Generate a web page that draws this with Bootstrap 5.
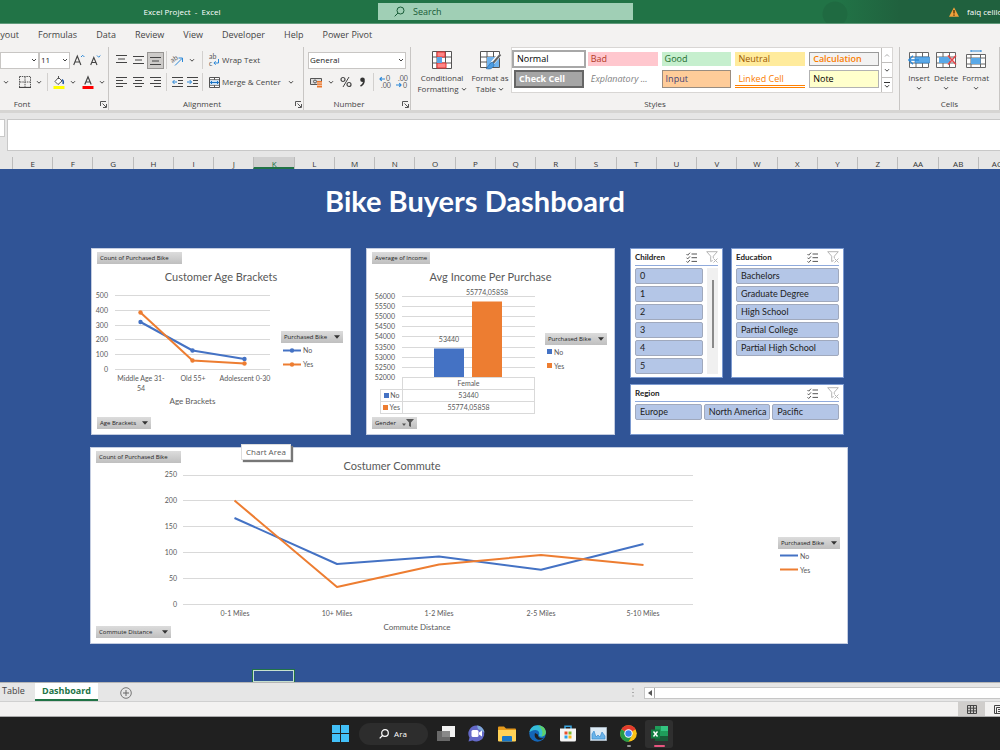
<!DOCTYPE html>
<html lang="en">
<head>
<meta charset="utf-8">
<meta name="viewport" content="width=device-width, initial-scale=1">
<title>Excel Project - Excel</title>
<link href="https://cdn.jsdelivr.net/npm/bootstrap@5.3.0/dist/css/bootstrap.min.css" rel="stylesheet">
<style>
:root{--xl:#217346;--ink:#444;--blue:#4472c4;--orange:#ed7d31;--ui:"Open Sans","Noto Sans",sans-serif;--cal:Lato,"Open Sans",sans-serif}
body{font-family:var(--ui);font-size:8px;line-height:12px;color:var(--ink);background:#f3f2f1;overflow:hidden}
button{font:inherit;color:inherit;border:0;background:none;padding:0;margin:0;display:flex;align-items:center;justify-content:center;white-space:nowrap}
svg{display:block;flex:none;overflow:visible}
a{color:inherit;text-decoration:none}
/* title bar */
.title-bar{height:24px;background:radial-gradient(circle at 835px 14px,#1f6a41 0 12px,transparent 13px),linear-gradient(90deg,var(--xl) 84%,#20613e 90%);border-bottom:1px solid #5f9a7a;color:#fff}
.doc-name{flex:364 0 0;margin-right:14px;text-align:center;white-space:pre}
.search-box{flex:255 0 0;height:17px;background:#a0cfb5;color:#185c37}
.search-box input{font-size:9px;line-height:12px;color:#185c37;border:0;background:none;padding:0;width:100%;outline:0}
.search-box input::placeholder{color:#185c37;opacity:1}
.title-right{flex:367 0 0;min-width:0}
.user-name{width:33px;overflow:hidden;white-space:nowrap}
/* ribbon */
.ribbon-tabs{height:22px;font-size:9px;gap:19px}
.tab-cut{width:19px;display:flex;justify-content:flex-end;overflow:hidden}
.ribbon{height:67px;border-bottom:3px solid #d6d5d3;padding-top:1px}
.group{border-right:1px solid #c8c6c4;height:63px;display:flex;flex-direction:column}
.g-font{flex:0 0 109px}.g-align{flex:0 0 195px}.g-num{flex:0 0 107px}.g-styles{flex:1 0 486px}.g-cells{flex:0 0 100px}
.tool-row{height:18px;margin-top:4px;display:flex;align-items:center}
.group-foot{margin-top:auto;height:12px;position:relative;width:100%;text-align:center}
.group-foot button{position:absolute;right:1px;top:3px}
.t17{width:17px;height:17px}.t12{width:12px;height:17px}
.t17.on{background:#cdcbc9;border:1px solid #979593}
.vsep{width:1px;height:18px;background:#d2d0ce;margin:0 2px}
.word-btn{gap:2px;margin-left:4px}
.drop{appearance:none;border:1px solid #c8c6c4;border-radius:0;background:#fff url("data:image/svg+xml,%3Csvg xmlns='http://www.w3.org/2000/svg' width='7' height='5'%3E%3Cpath d='M1 1l2 2 2-2' fill='none' stroke='%23444'/%3E%3C/svg%3E") no-repeat right 0 center;height:17px;padding:0 1px;font-size:8px;line-height:12px;color:#222}
.big{flex-direction:column;justify-content:flex-start;gap:3px;line-height:11px;padding-top:4px}
.style-tools{display:flex;gap:2px;padding:0 6px 0 4px}
.cell-tools{display:flex;gap:4px;padding-left:8px}
.gallery{border:1px solid #d8d6d4;background:#fff;height:46px}
.style-grid{display:grid;grid-template-columns:repeat(5,1fr);gap:4px;padding:4px 2px;flex:1}
.style-grid button{justify-content:flex-start;padding-left:3px;font-size:9px;line-height:12px;overflow:hidden;min-width:0}
.s-normal{outline:2px solid #a8a8a8;color:#000}
.s-bad{background:#ffc7ce;color:#b4391e}
.s-good{background:#c6efce;color:#1c6b2b}
.s-neutral{background:#ffeb9c;color:#9c5700}
button.s-calc{background:#f2f2f2;color:#fa7d00;border:1px solid #9a9a9a;font-weight:600}
button.s-check{background:#a5a5a5;color:#fff;font-weight:700;border:2px solid #666}
.s-expl{color:#7f7f7f;font-style:italic}
button.s-input{background:#ffcc99;color:#3f3f76;border:1px solid #9a8d80}
button.s-linked{color:#fa7d00;border-bottom:3px double #ff8001;padding-top:3px}
button.s-note{background:#ffffcc;color:#000;border:1px solid #b2b2b2}
.gal-scroll{width:11px;border-left:1px solid #c0bebc}
.gal-scroll button{flex:1;border-bottom:1px solid #c0bebc;width:100%}
/* formula bar and column heads */
.formula-bar{background:#e6e6e6;height:44px;padding-top:6px;gap:2px;align-items:flex-start}
.name-box{width:5px;height:18px;background:#fff;border:1px solid #c8c8c8;border-left:0}
.fx-input{flex:1;height:32px;border:1px solid #c8c8c8;border-right:0;background:#fff;border-radius:0;padding:0 4px}
.cols{display:grid;grid-template-columns:12px repeat(49,20fr) 2fr}
.col-heads{background:#e6e6e6;height:12px;color:#333;text-align:center;line-height:13px}
.col-heads>*{grid-column:span 2;border-left:1px solid #bcbcbc;overflow:hidden}
.col-heads>:first-child{grid-column:span 1;border-left:0}
.col-heads>:last-child{text-align:left;padding-left:13px}
.col-heads .picked{background:#cfcfcf;color:var(--xl);border-bottom:2px solid var(--xl)}
/* sheet */
.sheet{background:#305496;flex:1 0 auto}
.dash-title{font:700 29px/40px var(--cal);color:#fff;text-align:center;margin:12px 50px 27px 0}
.dash{padding:0 152px 0 90px;font-family:var(--cal);color:#595959}
.dash-top{display:grid;grid-template-columns:260fr 249fr 214fr;gap:15px;padding:0 4px 0 1px}
.panel{background:#fff;box-shadow:inset 0 0 0 1px #c3cce0;display:flex;flex-direction:column}
.chip{background:linear-gradient(#dcdcdc,#bfbfbf);height:12px;padding:0 3px;font:6px/12px var(--ui);color:#222;gap:6px;justify-content:space-between;margin-left:6px;width:max-content}
.chip-wide{width:85px}.chip-mid{width:75px}.chip-key{width:62px;margin:0}
.chip-low{margin-top:auto;margin-bottom:6px}
.chart-title{font-size:11px;font-weight:400;line-height:16px;text-align:center;margin:5px 0 0}
.plot{flex:1 1 0;min-width:0}
.plot svg,svg.plot{width:100%;height:auto}
.legend-box{width:62px;margin:6px 8px 0 6px;font-size:7px;line-height:14px;flex:none}
.legend-box div{display:flex;align-items:center;gap:2px;padding-left:2px}
svg text{font-family:var(--cal);font-size:7px;fill:#595959}
svg .mid{text-anchor:middle}svg .end{text-anchor:end}
svg .head-text{font-size:11px}svg .axis-title{font-size:8px}
.grid-line{stroke:#d9d9d9;stroke-width:1;fill:none}
.ln-no,.ln-yes{fill:none;stroke-width:2;stroke-linejoin:round}
.ln-no{stroke:var(--blue)}.ln-yes{stroke:var(--orange)}
.key{width:5px;height:5px;display:inline-block}
.key-no{background:var(--blue)}.key-yes{background:var(--orange)}
.data-table{margin-left:14px;width:155px;border-collapse:collapse;font-size:7px;line-height:11px;text-align:center;color:#595959}
.data-table td,.data-table th{border:1px solid #d9d9d9;padding:0;height:12px;font-weight:400}
.data-table .blank{border-left:0;border-top:0;width:22px}
.slicer-col{display:flex;flex-direction:column;gap:6px}
.slicer-top{display:flex;gap:8px;height:130px}
.slicer{background:#fff;padding:0 4px;font-size:8px;line-height:12px;color:#222;border:1px solid #7c9ad0}
.sl-children{flex:92 0 0}.sl-education{flex:114 0 0}.sl-region{height:51px}
.slicer-head{height:17px;border-bottom:1px solid #8faadc;font-weight:700;margin-bottom:2px}
.slice{background:#b4c6e7;border:1px solid #a0a9bd;border-radius:2px;height:16px;width:100%;justify-content:flex-start;padding-left:4px;color:#222;font-size:9px}
.slice-list{display:flex;flex-direction:column;gap:2px}
.region-row{display:flex;gap:2px}
.region-row .slice{flex:1 1 0}
.scroll-track{width:11px;background:#f0f0f0;display:flex;justify-content:center;padding:12px 0 26px}
.scroll-track span{width:2px;background:#8a8a8a}
.commute{margin-top:12px;position:relative;flex-direction:row;align-items:center}
.commute .chip-wide{position:absolute;left:0;top:4px}
.commute .chip-mid{position:absolute;left:0;bottom:6px}
.commute .legend-box{margin-top:22px}
.tip{position:absolute;left:151px;top:-3px;background:#fff;font-size:8px;line-height:14px;padding:0 4px;font-family:var(--ui);box-shadow:2px 2px 1px #777;border:1px solid #ddd}
.picked-cell{grid-column:14/span 2;height:12px;border:1px solid #c6e0cf;outline:1px solid var(--xl)}
/* bottom bars */
.sheet-tabs{height:20px;background:#e6e6e6;border-top:1px solid #b5b5b5;border-bottom:1px solid #d0d0d0;font-size:9px;align-items:flex-start}
.sheet-tabs a{line-height:16px}
.prev-tab{width:35px;padding-left:2px}
.sheet-tabs .current{background:#fff;color:var(--xl);font-weight:700;width:63px;text-align:center;border-bottom:2px solid var(--xl)}
.add-tab{margin:4px 0 0 22px}
.h-scroll{flex:0 0 356px;height:12px;border:1px solid #c6c6c6;border-right:0;background:#fff;margin-top:4px}
.h-scroll button{width:10px;border-right:1px solid #aaa;height:10px}
.status-bar{height:15px;background:#f3f2f1;border-bottom:1px solid #aaa}
.status-bar button{width:27px;height:14px}
.view-on{background:#d0cecc!important}
.view-cut{width:15px;overflow:hidden}
.taskbar{height:33px;background:#202020;color:#fff;gap:4px}
.find{width:69px;height:22px;border-radius:11px;background:#2d2d2d;gap:5px;color:#fff}
.app{width:28px;height:28px;border-radius:3px;position:relative}
.app.open{background:#2f2f2f}
.app.open::after,.app.live::after{content:"";position:absolute;bottom:1px;width:11px;height:2px;border-radius:1px;background:#e8557f}
.app.live::after{width:4px;background:#999}
.apps{width:242px}
</style>
</head>
<body class="d-flex flex-column min-vh-100">
<svg width="0" height="0" class="position-absolute" aria-hidden="true">
  <symbol id="chev" viewBox="0 0 6 5"><path d="M1 1.200l2 2 2-2" fill="none" stroke="#444"/></symbol>
  <symbol id="launch" viewBox="0 0 7 7"><path d="M.5 5V.5H6M2.500 2.500L6 6M6.500 3v3.500H3" fill="none" stroke="#555"/></symbol>
  <symbol id="multi" viewBox="0 0 12 11"><path d="M.5 2l1.200 1.200L4 .7M.5 5.700l1.200 1.200L4 4.400M.5 9.300l1.200 1.200L4 8M5.500 2H11M5.500 5.700H11M5.500 9.400H11" fill="none" stroke="#555"/></symbol>
  <symbol id="clear" viewBox="0 0 12 12"><path d="M.7.7h10.600L7.300 5.200V7M.7.7l4 4.500v5.300l2 -1M7.500 7.500l4 4M11.500 7.500l-4 4" fill="none" stroke="#b4b4b4"/></symbol>
  <symbol id="tri" viewBox="0 0 6 4"><path d="M0 .3h6L3 3.700z" fill="#333"/></symbol>
</svg>

<header>
  <div class="title-bar d-flex align-items-center">
    <div class="doc-name">Excel Project  -  Excel</div>
    <label class="search-box d-flex align-items-center">
      <svg class="mx-2 ms-3" width="11" height="11" viewBox="0 0 11 11"><circle cx="6.500" cy="4.500" r="3.500" fill="none" stroke="#185c37"/><path d="M4 7L.7 10.300" stroke="#185c37"/></svg>
      <input type="search" placeholder="Search" aria-label="Search">
    </label>
    <div class="title-right d-flex align-items-center justify-content-end gap-2">
      <svg width="10" height="10" viewBox="0 0 10 10"><path d="M5 .3L10 9.700H0z" fill="#f0a13c"/><path d="M5 3v3.500M5 7.500v1.200" stroke="#4a2c00" stroke-width="1.300"/></svg>
      <div class="user-name">faiq celilov</div>
    </div>
  </div>
  <nav class="ribbon-tabs d-flex align-items-center" aria-label="Ribbon">
    <a href="#" class="tab-cut">Layout</a><a href="#">Formulas</a><a href="#">Data</a><a href="#">Review</a><a href="#">View</a><a href="#">Developer</a><a href="#">Help</a><a href="#" class="text-nowrap">Power Pivot</a>
  </nav>
  <div class="ribbon d-flex">
    <section class="group g-font">
      <div class="tool-row">
        <select class="drop" style="width:39px" aria-label="Font"><option></option></select>
        <select class="drop" style="width:31px" aria-label="Font size"><option>11</option></select>
        <button class="t17" aria-label="Grow font"><svg width="12" height="12" viewBox="0 0 12 12"><path d="M.7 11L4.300 2l3.600 9M2 8h4.700" fill="none" stroke="#444" stroke-width="1.100"/><path d="M8 3l1.700-1.700L11.400 3" fill="none" stroke="#2b88d8"/></svg></button>
        <button class="t17" aria-label="Shrink font"><svg width="11" height="12" viewBox="0 0 11 12"><path d="M.7 11L3.800 3.500 7 11M2 8.500h3.800" fill="none" stroke="#444" stroke-width="1.100"/><path d="M7 1.500l1.700 1.700 1.700-1.700" fill="none" stroke="#2b88d8"/></svg></button>
      </div>
      <div class="tool-row">
        <button class="t12" aria-label="Underline options"><svg width="6" height="5"><use href="#chev"/></svg></button>
        <button class="t17 ms-1" aria-label="Borders"><svg width="12" height="12" viewBox="0 0 12 12"><path d="M.5.500h11v11M.5.500v11M6 1v10M1 6h10" fill="none" stroke="#555" stroke-dasharray="1.500 .8"/><path d="M0 11.400h12" stroke="#333"/></svg></button>
        <button class="t12" aria-label="Border options"><svg width="6" height="5"><use href="#chev"/></svg></button>
        <span class="vsep"></span>
        <button class="t17" aria-label="Fill color"><svg width="12" height="13" viewBox="0 0 12 13"><path d="M5.500 1.500L9 5 5 8.500 2 5.500zM5.500 3V0" fill="#fff" stroke="#555"/><path d="M9 3.500c1.500 1 1.500 3 1 4.500" fill="none" stroke="#2458a6" stroke-width="1.500"/><path d="M.5 10h11v3H.5z" fill="#ff0"/></svg></button>
        <button class="t12" aria-label="Fill options"><svg width="6" height="5"><use href="#chev"/></svg></button>
        <button class="t17" aria-label="Font color"><svg width="12" height="13" viewBox="0 0 12 13"><path d="M2.800 8.500L6 .8l3.200 7.700M4 6h4" fill="none" stroke="#444" stroke-width="1.200"/><path d="M.5 10h11v3H.5z" fill="red"/></svg></button>
        <button class="t12" aria-label="Font color options"><svg width="6" height="5"><use href="#chev"/></svg></button>
      </div>
      <div class="group-foot pe-5"><span class="pe-3">Font</span><button aria-label="Font settings"><svg width="7" height="7"><use href="#launch"/></svg></button></div>
    </section>
    <section class="group g-align">
      <div class="tool-row ps-1">
        <button class="t17" aria-label="Top align"><svg width="11" height="10" viewBox="0 0 11 10"><path d="M0 .5h11M2 4h7M0 7.500h11" stroke="#444"/></svg></button>
        <button class="t17" aria-label="Middle align"><svg width="11" height="10" viewBox="0 0 11 10"><path d="M0 1.500h11M2 5h7M0 8.500h11" stroke="#444"/></svg></button>
        <button class="t17 on" aria-label="Bottom align"><svg width="11" height="10" viewBox="0 0 11 10"><path d="M0 2.500h11M2 6h7M0 9.500h11" stroke="#444"/></svg></button>
        <span class="vsep"></span>
        <button class="t17" aria-label="Orientation"><svg width="13" height="12" viewBox="0 0 13 12"><text x="0" y="7" transform="rotate(-35 4 6)">ab</text><path d="M4 11.500L11 4.500M7.500 4h4v4" fill="none" stroke="#2b88d8"/></svg></button>
        <button class="t12" aria-label="Orientation options"><svg width="6" height="5"><use href="#chev"/></svg></button>
        <span class="vsep ms-1"></span>
        <button class="word-btn"><svg width="11" height="12" viewBox="0 0 11 12"><text x="0" y="5">ab</text><text x="0" y="12">c</text><path d="M9.500 5v4H5M6.700 7.200L4.900 9l1.800 1.800" fill="none" stroke="#2b88d8"/></svg><span>Wrap Text</span></button>
      </div>
      <div class="tool-row ps-1">
        <button class="t17" aria-label="Align left"><svg width="11" height="10" viewBox="0 0 11 10"><path d="M0 .5h11M0 3.500h7M0 6.500h11M0 9.500h7" stroke="#444"/></svg></button>
        <button class="t17" aria-label="Center"><svg width="11" height="10" viewBox="0 0 11 10"><path d="M0 .5h11M2 3.500h7M0 6.500h11M2 9.500h7" stroke="#444"/></svg></button>
        <button class="t17" aria-label="Align right"><svg width="11" height="10" viewBox="0 0 11 10"><path d="M0 .5h11M4 3.500h7M0 6.500h11M4 9.500h7" stroke="#444"/></svg></button>
        <span class="vsep"></span>
        <button class="t17" aria-label="Decrease indent"><svg width="11" height="10" viewBox="0 0 11 10"><path d="M0 .5h11M6 3.500h5M6 6.500h5M0 9.500h11" stroke="#444"/><path d="M5 5H.7M2.500 3L.7 5l1.800 2" fill="none" stroke="#2b88d8"/></svg></button>
        <button class="t12" aria-label="Increase indent"><svg width="11" height="10" viewBox="0 0 11 10"><path d="M0 .5h11M6 3.500h5M6 6.500h5M0 9.500h11" stroke="#444"/><path d="M0 5h4.500M2.700 3l1.800 2-1.800 2" fill="none" stroke="#2b88d8"/></svg></button>
        <span class="vsep ms-1"></span>
        <button class="word-btn"><svg width="11" height="11" viewBox="0 0 11 11"><path d="M.5.500h10v10H.5zM.5 2.800h10M.5 8.200h10M5.500 .5v2.300M5.500 8.200v2.300" fill="#fff" stroke="#555"/><path d="M1 3.300h9v4.400H1z" fill="#cfe4f7"/><path d="M1.200 5.500h8.600M3 4L1.500 5.500 3 7M8 4l1.500 1.500L8 7" fill="none" stroke="#1a73c4"/></svg><span>Merge &amp; Center</span></button>
        <button class="t12 ms-1" aria-label="Merge options"><svg width="6" height="5"><use href="#chev"/></svg></button>
      </div>
      <div class="group-foot"><span class="pe-2">Alignment</span><button aria-label="Alignment settings"><svg width="7" height="7"><use href="#launch"/></svg></button></div>
    </section>
    <section class="group g-num">
      <div class="tool-row ps-1 pe-1"><select class="drop w-100" aria-label="Number format"><option>General</option></select></div>
      <div class="tool-row ps-1">
        <button class="t17" aria-label="Accounting format"><svg width="13" height="11" viewBox="0 0 13 11"><path d="M.5 1.500h11v6H.5z" fill="#ddd" stroke="#555"/><circle cx="5" cy="4.500" r="1.500" fill="none" stroke="#555"/><path d="M7 4h5v6.500H7z" fill="#e8762c"/><path d="M7 6h5M7 8.300h5" stroke="#fff" stroke-width=".7"/></svg></button>
        <button class="t12" aria-label="Accounting options"><svg width="6" height="5"><use href="#chev"/></svg></button>
        <button class="t17" aria-label="Percent"><svg width="12" height="12" viewBox="0 0 12 12"><circle cx="3" cy="3.500" r="2" fill="none" stroke="#444" stroke-width="1.200"/><circle cx="9" cy="8.500" r="2" fill="none" stroke="#444" stroke-width="1.200"/><path d="M9 1L3 11" stroke="#444"/></svg></button>
        <button class="t17" aria-label="Comma style"><svg width="7" height="10" viewBox="0 0 7 10"><circle cx="3.500" cy="2.800" r="2.300" fill="#333"/><path d="M5 3.500C5 6.500 3.500 8 1.500 9" fill="none" stroke="#333" stroke-width="1.600"/></svg></button>
        <span class="vsep"></span>
        <button class="t17" aria-label="Increase decimal"><svg width="12" height="12" viewBox="0 0 12 12"><text x="7" y="5">0</text><text x="2" y="12">.00</text><path d="M6 3H1M2.700 1.200L1 3l1.700 1.800" fill="none" stroke="#2b88d8" stroke-width="1.200"/></svg></button>
        <button class="t17" aria-label="Decrease decimal"><svg width="12" height="12" viewBox="0 0 12 12"><text x="2" y="5">.00</text><text x="7" y="12">0</text><path d="M0 9h5M3.300 7.200L5 9l-1.700 1.800" fill="none" stroke="#2b88d8" stroke-width="1.200"/></svg></button>
      </div>
      <div class="group-foot"><span class="pe-3">Number</span><button aria-label="Number settings"><svg width="7" height="7"><use href="#launch"/></svg></button></div>
    </section>
    <section class="group g-styles">
      <div class="style-tools">
        <button class="big" style="width:54px"><svg width="20" height="18" viewBox="0 0 20 18"><path d="M.5.500h19v17H.5zM.5 6h19M.5 12h19M5 .5v17M13.500 .5v17" fill="#fff" stroke="#555"/><path d="M5 1h8v5H5zM5 12h9v5H5z" fill="#ff8585" stroke="#e03535"/><path d="M5 6h5v6H5z" fill="#5aa5e6"/></svg><span>Conditional<br>Formatting <svg class="d-inline-block" width="6" height="5"><use href="#chev"/></svg></span></button>
        <button class="big" style="width:38px"><svg width="21" height="18" viewBox="0 0 21 18"><path d="M.5.500h19v16H.5zM.5 6h19M.5 11h19M7 .5v16M13.500 .5v16" fill="#fff" stroke="#555"/><path d="M7 6h12v10H7z" fill="#6fb3ee"/><path d="M20 3.500l-8 9" stroke="#fff" stroke-width="4"/><path d="M20.500 3.500L13 12" stroke="#666" stroke-width="2"/><path d="M12.500 11c-3 .5-3 4-6.500 6.500 4 1.500 8-.5 8-4.500z" fill="#4a9be0" stroke="#225f9c" stroke-width=".6"/></svg><span>Format as<br>Table <svg class="d-inline-block" width="6" height="5"><use href="#chev"/></svg></span></button>
        <div class="gallery d-flex flex-fill">
          <div class="style-grid">
            <button class="s-normal">Normal</button><button class="s-bad">Bad</button><button class="s-good">Good</button><button class="s-neutral">Neutral</button><button class="s-calc">Calculation</button>
            <button class="s-check">Check Cell</button><button class="s-expl">Explanatory ...</button><button class="s-input">Input</button><button class="s-linked">Linked Cell</button><button class="s-note">Note</button>
          </div>
          <div class="gal-scroll d-flex flex-column">
            <button aria-label="Previous styles"><svg width="6" height="5" viewBox="0 0 6 5"><path d="M1 3.500l2-2 2 2" fill="none" stroke="#aaa"/></svg></button>
            <button aria-label="Next styles"><svg width="6" height="5"><use href="#chev"/></svg></button>
            <button class="border-bottom-0" aria-label="More styles"><svg width="6" height="7" viewBox="0 0 6 7"><path d="M0 .5h6M1 3.200l2 2 2-2" fill="none" stroke="#333"/></svg></button>
          </div>
        </div>
      </div>
      <div class="group-foot">Styles</div>
    </section>
    <section class="group g-cells">
      <div class="cell-tools">
        <button class="big"><svg width="22" height="18" viewBox="0 0 22 18"><path d="M1.500 1.500h19v15h-19zM1.500 6h19M1.500 12h19M8 1.500v15M14.500 1.500v15" fill="#fff" stroke="#666"/><path d="M7 6h14.500v6H7z" fill="#5aa9e8" stroke="#2b7cc4" stroke-width=".6"/><path d="M11 9H1M5 4.800L.8 9 5 13.200" fill="none" stroke="#2b88d8" stroke-width="1.300"/></svg><span>Insert</span><svg width="6" height="5"><use href="#chev"/></svg></button>
        <button class="big"><svg width="22" height="18" viewBox="0 0 22 18"><path d="M1.500 1.500h19v15h-19zM1.500 6h19M1.500 12h19M8 1.500v15M14.500 1.500v15" fill="#fff" stroke="#666"/><path d="M4 6h9l3 3-3 3H4z" fill="#5aa9e8"/><path d="M13 4.500l8 9M21 4.500l-8 9" stroke="#e5474b" stroke-width="1.500"/></svg><span>Delete</span><svg width="6" height="5"><use href="#chev"/></svg></button>
        <button class="big"><svg width="22" height="18" viewBox="0 0 22 18"><path d="M1.500 3.500h19v13h-19zM1.500 7h19M1.500 13h19M6 3.500v13M15.500 3.500v13" fill="#fff" stroke="#666"/><path d="M6 7h9.500v6H6z" fill="#5aa9e8"/><path d="M6 0h10M6 -1v2M16 -1v2" stroke="#2b88d8"/></svg><span>Format</span><svg width="6" height="5"><use href="#chev"/></svg></button>
      </div>
      <div class="group-foot">Cells</div>
    </section>
  </div>
</header>

<div class="formula-bar d-flex"><div class="name-box"></div><input class="fx-input" type="text" aria-label="Formula bar"></div>
<div class="col-heads cols"><span></span><span>E</span><span>F</span><span>G</span><span>H</span><span>I</span><span>J</span><span class="picked">K</span><span>L</span><span>M</span><span>N</span><span>O</span><span>P</span><span>Q</span><span>R</span><span>S</span><span>T</span><span>U</span><span>V</span><span>W</span><span>X</span><span>Y</span><span>Z</span><span>AA</span><span>AB</span><span>AC</span></div>

<main class="sheet d-flex flex-column">
  <h1 class="dash-title">Bike Buyers Dashboard</h1>
  <div class="dash">
    <div class="dash-top">
      <section class="panel pt-1">
        <button class="chip chip-wide">Count of Purchased Bike</button>
        <h2 class="chart-title">Customer Age Brackets</h2>
        <div class="d-flex align-items-center">
          <div class="plot"><svg viewBox="91 285 184 126" role="img" aria-label="Customer age brackets">
            <path class="grid-line" d="M115 295.500h155M115 310.500h155M115 325.500h155M115 339.500h155M115 354.500h155M115 369.500h155"/>
            <g class="end"><text x="108" y="298">500</text><text x="108" y="313">400</text><text x="108" y="328">300</text><text x="108" y="342">200</text><text x="108" y="357">100</text><text x="108" y="372">0</text></g>
            <path class="ln-no" d="M140.500 322L192.500 350.500 244.500 359"/><g fill="#4472c4"><circle cx="140.500" cy="322" r="2.200"/><circle cx="192.500" cy="350.500" r="2.200"/><circle cx="244.500" cy="359" r="2.200"/></g>
            <path class="ln-yes" d="M140.500 312.500L192.500 360.500 244.500 363.500"/><g fill="#ed7d31"><circle cx="140.500" cy="312.500" r="2.200"/><circle cx="192.500" cy="360.500" r="2.200"/><circle cx="244.500" cy="363.500" r="2.200"/></g>
            <g class="mid"><text x="141" y="381">Middle Age 31-</text><text x="141" y="391">54</text><text x="193" y="381">Old 55+</text><text x="245" y="381">Adolescent 0-30</text><text class="axis-title" x="192.500" y="404">Age Brackets</text></g>
          </svg></div>
          <div class="legend-box">
            <button class="chip chip-key">Purchased Bike<svg width="6" height="4"><use href="#tri"/></svg></button>
            <div><svg width="18" height="5"><path class="ln-no" d="M0 2.500h18"/><circle cx="9" cy="2.500" r="2.200" fill="#4472c4"/></svg>No</div>
            <div><svg width="18" height="5"><path class="ln-yes" d="M0 2.500h18"/><circle cx="9" cy="2.500" r="2.200" fill="#ed7d31"/></svg>Yes</div>
          </div>
        </div>
        <button class="chip chip-low">Age Brackets<svg width="6" height="4"><use href="#tri"/></svg></button>
      </section>

      <section class="panel pt-1">
        <button class="chip">Average of Income</button>
        <h2 class="chart-title">Avg Income Per Purchase</h2>
        <div class="d-flex align-items-center">
          <div class="plot"><svg viewBox="366 285 173 92" role="img" aria-label="Average income per purchase">
            <path class="grid-line" d="M402 296.500h133M402 306.500h133M402 316.500h133M402 326.500h133M402 336.500h133M402 347.500h133M402 357.500h133M402 367.500h133"/>
            <g class="end"><text x="395" y="299">56000</text><text x="395" y="309">55500</text><text x="395" y="319">55000</text><text x="395" y="329">54500</text><text x="395" y="339">54000</text><text x="395" y="350">53500</text><text x="395" y="360">53000</text><text x="395" y="370">52500</text><text x="395" y="380">52000</text></g>
            <path fill="#4472c4" d="M434 348.500h30V377h-30z"/><path fill="#ed7d31" d="M472 301.500h30V377h-30z"/>
            <g class="mid"><text x="449" y="342">53440</text><text x="487" y="295">55774,05858</text></g>
          </svg>
          <table class="data-table">
            <tr><td class="blank"></td><th scope="col">Female</th></tr>
            <tr><th scope="row"><span class="key key-no"></span> No</th><td>53440</td></tr>
            <tr><th scope="row"><span class="key key-yes"></span> Yes</th><td>55774,05858</td></tr>
          </table></div>
          <div class="legend-box">
            <button class="chip chip-key">Purchased Bike<svg width="6" height="4"><use href="#tri"/></svg></button>
            <div><span class="key key-no"></span>No</div>
            <div><span class="key key-yes"></span>Yes</div>
          </div>
        </div>
        <button class="chip chip-low">Gender<svg width="12" height="8" viewBox="0 0 12 8"><path d="M0 4.500h4L2 7zM4 0h8L9 3.500V8L7 7V3.500z" fill="#555"/></svg></button>
      </section>

      <div class="slicer-col">
        <div class="slicer-top">
          <section class="slicer sl-children">
            <div class="slicer-head d-flex align-items-center"><span class="me-auto">Children</span><svg width="12" height="11"><use href="#multi"/></svg><svg class="ms-2" width="12" height="12"><use href="#clear"/></svg></div>
            <div class="d-flex gap-1">
              <div class="slice-list flex-fill"><button class="slice">0</button><button class="slice">1</button><button class="slice">2</button><button class="slice">3</button><button class="slice">4</button><button class="slice">5</button></div>
              <div class="scroll-track"><span></span></div>
            </div>
          </section>
          <section class="slicer sl-education">
            <div class="slicer-head d-flex align-items-center"><span class="me-auto">Education</span><svg width="12" height="11"><use href="#multi"/></svg><svg class="ms-2" width="12" height="12"><use href="#clear"/></svg></div>
            <div class="slice-list"><button class="slice">Bachelors</button><button class="slice">Graduate Degree</button><button class="slice">High School</button><button class="slice">Partial College</button><button class="slice">Partial High School</button></div>
          </section>
        </div>
        <section class="slicer sl-region">
          <div class="slicer-head d-flex align-items-center"><span class="me-auto">Region</span><svg width="12" height="11"><use href="#multi"/></svg><svg class="ms-2" width="12" height="12"><use href="#clear"/></svg></div>
          <div class="region-row"><button class="slice">Europe</button><button class="slice">North America</button><button class="slice">Pacific</button></div>
        </section>
      </div>
    </div>

    <section class="panel commute">
      <button class="chip chip-wide">Count of Purchased Bike</button>
      <svg class="plot" viewBox="90 447 682 197" role="img" aria-label="Costumer commute">
        <path class="grid-line" d="M183 475.500h510M183 500.500h510M183 526.500h510M183 552.500h510M183 578.500h510M183 604.500h510"/>
        <g class="end"><text x="177" y="477">250</text><text x="177" y="503">200</text><text x="177" y="529">150</text><text x="177" y="555">100</text><text x="177" y="581">50</text><text x="177" y="607">0</text></g>
        <path class="ln-no" d="M234.500 518L337 564l102-7.500L541 569.700 643.500 544"/>
        <path class="ln-yes" d="M234.500 500.500L337 587l102-22.500L541 555l102.500 10"/>
        <g class="mid"><text class="head-text" x="392" y="470">Costumer Commute</text><text x="235" y="616">0-1 Miles</text><text x="337" y="616">10+ Miles</text><text x="439" y="616">1-2 Miles</text><text x="541" y="616">2-5 Miles</text><text x="643" y="616">5-10 Miles</text><text class="axis-title" x="417" y="630">Commute Distance</text></g>
      </svg>
      <div class="legend-box">
        <button class="chip chip-key">Purchased Bike<svg width="6" height="4"><use href="#tri"/></svg></button>
        <div><svg width="18" height="5"><path class="ln-no" d="M0 2.500h18"/></svg>No</div>
        <div><svg width="18" height="5"><path class="ln-yes" d="M0 2.500h18"/></svg>Yes</div>
      </div>
      <button class="chip chip-mid">Commute Distance<svg width="6" height="4"><use href="#tri"/></svg></button>
      <div class="tip" role="tooltip">Chart Area</div>
    </section>
  </div>
  <div class="cols mt-auto"><div class="picked-cell"></div></div>
</main>

<footer>
  <div class="sheet-tabs d-flex">
    <a href="#" class="prev-tab">Table</a><a href="#" class="current">Dashboard</a>
    <button class="add-tab" aria-label="New sheet"><svg width="12" height="12" viewBox="0 0 12 12"><circle cx="6" cy="6" r="5.300" fill="none" stroke="#777"/><path d="M6 3v6M3 6h6" stroke="#666"/></svg></button>
    <svg class="ms-auto me-2 mt-1" width="6" height="12" viewBox="0 0 6 12"><path d="M2 2h2M2 5.500h2M2 9h2" stroke="#aaa"/></svg>
    <div class="h-scroll"><button aria-label="Scroll left"><svg width="4" height="6" viewBox="0 0 4 6"><path d="M4 0v6L0 3z" fill="#555"/></svg></button></div>
  </div>
  <div class="status-bar d-flex justify-content-end">
    <button class="view-on" aria-label="Normal view"><svg width="10" height="9" viewBox="0 0 10 9"><path d="M.5.500h9v8h-9zM.5 3.200h9M.5 5.900h9M3.500 .5v8M6.500 .5v8" fill="none" stroke="#444"/></svg></button>
    <div class="view-cut"><button aria-label="Page layout view"><svg width="10" height="9" viewBox="0 0 10 9"><path d="M.5.500h9v8h-9zM2.500 2.500h5v6h-5zM4 4.500h2M4 6.500h2" fill="none" stroke="#444"/></svg></button></div>
  </div>
  <div class="taskbar d-flex align-items-center justify-content-center">
    <button class="app" aria-label="Start"><svg width="17" height="17" viewBox="0 0 17 17"><path d="M0 0h8v8H0zM9 0h8v8H9zM0 9h8v8H0zM9 9h8v8H9z" fill="#42c0f8"/></svg></button>
    <button class="find"><svg width="10" height="10" viewBox="0 0 10 10"><circle cx="6" cy="4" r="3.300" fill="none" stroke="#fff" stroke-width="1.200"/><path d="M3.500 6.500L.7 9.300" stroke="#fff" stroke-width="1.200"/></svg><span>Ara</span></button>
    <div class="apps d-flex justify-content-between">
      <button class="app" aria-label="Task view"><svg width="18" height="16" viewBox="0 0 18 16"><path d="M5 0h13v11H5z" fill="#f2f2f2"/><path d="M0 5h13v10H0z" fill="#777" opacity=".85"/></svg></button>
      <button class="app" aria-label="Chat"><svg width="17" height="17" viewBox="0 0 17 17"><path d="M8.500.5a8 8 0 1 1-4 15L.5 16.500 1.500 12.500A8 8 0 0 1 8.500.5z" fill="#6469c8"/><path d="M9 .5a8 8 0 0 1 7.500 7L10 4z" fill="#7fa8d8"/><rect x="3.500" y="5" width="7" height="7" rx="1.500" fill="#fff"/><path d="M11 7.500l3-2v6l-3-2z" fill="#fff"/></svg></button>
      <button class="app" aria-label="Files"><svg width="18" height="16" viewBox="0 0 18 16"><path d="M0 1.500Q0 .5 1 .5h5l2 2h9q1 0 1 1V15H0z" fill="#e59a1c"/><path d="M0 4h18v10.500q0 1-1 1H1q-1 0-1-1z" fill="#ffd257"/><path d="M4 15.500V11q0-1 1-1h8q1 0 1 1v4.500z" fill="#1777c9"/></svg></button>
      <button class="app" aria-label="Edge"><svg width="17" height="17" viewBox="0 0 17 17"><circle cx="8.500" cy="8.500" r="8.300" fill="#1466b8"/><path d="M.3 7.500C1 3 4.500.2 8.500.2c5 0 8.300 3.300 8.300 7 0 3-2.500 4.300-4.800 4.300-1.500 0-2.500-.7-2-1.500C11 8 9.500 5 6.500 5 3.500 5 1 6.500.3 7.500z" fill="#35bdd8"/><path d="M9 .2c4.700.3 7.800 3.500 7.800 7 0 3-2.500 4.300-4.800 4.300C15 9 13 3 9 .2z" fill="#5fd06a"/><path d="M6 8c-1.500 4 2 8 6.500 6.500l3-2C13 14 8.500 13 8.800 9.500z" fill="#202020"/></svg></button>
      <button class="app" aria-label="Store"><svg width="16" height="17" viewBox="0 0 16 17"><path d="M5 4V1.200h6V4" fill="none" stroke="#3aa5e0" stroke-width="1.500"/><path d="M0 3.500h16V15q0 1.500-1.500 1.500h-13Q0 16.500 0 15z" fill="#f5f5f5"/><path d="M4.500 6.500h3v3h-3z" fill="#e8502c"/><path d="M8.500 6.500h3v3h-3z" fill="#7cb92c"/><path d="M4.500 10.500h3v3h-3z" fill="#2aa0e8"/><path d="M8.500 10.500h3v3h-3z" fill="#f6b51c"/></svg></button>
      <button class="app" aria-label="Monitor"><svg width="17" height="14" viewBox="0 0 17 14"><path d="M.5.500h16v13H.5z" fill="#dceaf5" stroke="#a7b4bf"/><path d="M2 12V7l2-3 2 6 2-2 2 2 2-5 3 4v3z" fill="#6ab4ea" stroke="#2f83c8" stroke-width=".6"/></svg></button>
      <button class="app live" aria-label="Chrome"><svg width="17" height="17" viewBox="0 0 17 17"><circle cx="8.500" cy="8.500" r="8.300" fill="#fbc116"/><path d="M8.500 8.500L1.300 4.300a8.300 8.300 0 0 1 14.400 0z" fill="#e33b2e"/><path d="M8.500 8.500L1.300 4.300a8.300 8.300 0 0 0 7.200 12.500l4-7z" fill="#259b48"/><circle cx="8.500" cy="8.500" r="4.200" fill="#fff"/><circle cx="8.500" cy="8.500" r="3.200" fill="#3b86ee"/></svg></button>
      <button class="app open" aria-label="Excel"><svg width="17" height="16" viewBox="0 0 17 16"><path d="M4 0h13v15H4z" fill="#1f9d5a"/><path d="M10 0h7v5h-7z" fill="#33c481"/><path d="M4 10h13v5H4z" fill="#185c37"/><path d="M0 3.500h9v9H0z" fill="#107c41"/><path d="M2.500 5.500l4 5M6.500 5.500l-4 5" stroke="#fff" stroke-width="1.400"/></svg></button>
    </div>
  </div>
</footer>
<script src="https://cdn.jsdelivr.net/npm/bootstrap@5.3.0/dist/js/bootstrap.bundle.min.js"></script>
</body>
</html>
